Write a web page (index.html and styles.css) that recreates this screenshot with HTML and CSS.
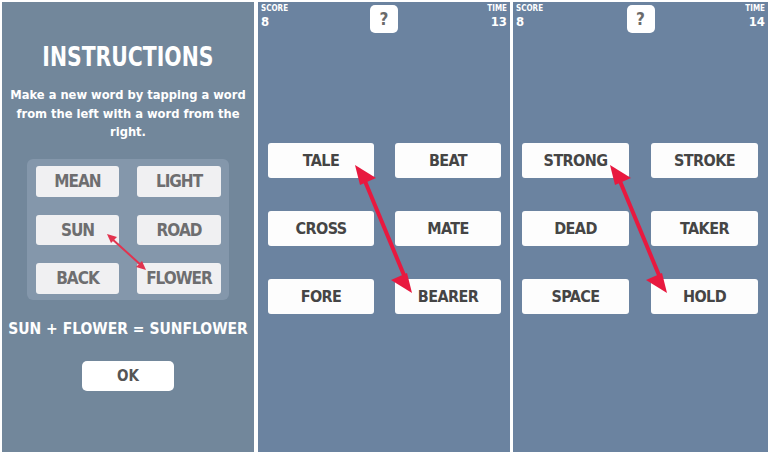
FILE: index.html
```html
<!DOCTYPE html>
<html>
<head>
<meta charset="utf-8">
<link rel="stylesheet" href="styles.css">
</head>
<body>
<div class="strip">
  <section class="panel intro">
    <h1 class="title">INSTRUCTIONS</h1>
    <p class="desc">Make a new word by tapping a word from the left with a word from the right.</p>
    <div class="demo">
      <div class="demo-grid">
        <div class="chip">MEAN</div>
        <div class="chip">LIGHT</div>
        <div class="chip">SUN</div>
        <div class="chip">ROAD</div>
        <div class="chip">BACK</div>
        <div class="chip">FLOWER</div>
      </div>
      <svg class="arrow" width="202" height="141" viewBox="0 0 202 141">
        <line x1="84" y1="79" x2="115" y2="107" stroke="#e2334f" stroke-width="2"/>
        <polygon points="80,75 90,78 84,84" fill="#e2334f"/>
        <polygon points="119,111 109,108 115,102" fill="#e2334f"/>
      </svg>
    </div>
    <p class="equation">SUN + FLOWER = SUNFLOWER</p>
    <div class="ok">OK</div>
  </section>

  <section class="panel game">
    <header class="hud">
      <div class="stat"><span class="label">SCORE</span><span class="value">8</span></div>
      <div class="help">?</div>
      <div class="stat right"><span class="label">TIME</span><span class="value">13</span></div>
    </header>
    <div class="board">
      <div class="word">TALE</div>
      <div class="word">BEAT</div>
      <div class="word">CROSS</div>
      <div class="word">MATE</div>
      <div class="word">FORE</div>
      <div class="word">BEARER</div>
    </div>
    <svg class="big-arrow" width="252" height="450" viewBox="0 0 252 450">
      <line x1="104" y1="172" x2="148" y2="278" stroke="#e8193f" stroke-width="4"/>
      <polygon points="97,163 118,176 102,183" fill="#e8193f"/>
      <polygon points="154,291 133,278 149,271" fill="#e8193f"/>
    </svg>
  </section>

  <section class="panel game wide">
    <header class="hud">
      <div class="stat"><span class="label">SCORE</span><span class="value">8</span></div>
      <div class="help">?</div>
      <div class="stat right"><span class="label">TIME</span><span class="value">14</span></div>
    </header>
    <div class="board">
      <div class="word">STRONG</div>
      <div class="word">STROKE</div>
      <div class="word">DEAD</div>
      <div class="word">TAKER</div>
      <div class="word">SPACE</div>
      <div class="word">HOLD</div>
    </div>
    <svg class="big-arrow" width="255" height="450" viewBox="0 0 255 450">
      <line x1="104" y1="172" x2="148" y2="278" stroke="#e8193f" stroke-width="4"/>
      <polygon points="97,163 118,176 102,183" fill="#e8193f"/>
      <polygon points="154,291 133,278 149,271" fill="#e8193f"/>
    </svg>
  </section>
</div>
</body>
</html>
```
FILE: styles.css
```css
html, body {
  margin: 0;
  padding: 0;
  background: #ffffff;
  width: 768px;
  height: 455px;
  overflow: hidden;
}

body {
  font-family: "DejaVu Sans Condensed", "DejaVu Sans", sans-serif;
  font-weight: bold;
}

.strip {
  display: flex;
  gap: 4px;
  padding: 2px 0 0 2px;
}

.panel {
  position: relative;
  width: 252px;
  height: 450px;
  box-sizing: border-box;
}

.intro {
  background: #72879b;
  display: flex;
  flex-direction: column;
  align-items: center;
  color: #ffffff;
}

.title {
  margin: 39px 0 0;
  font-size: 27px;
  line-height: 32px;
  font-weight: bold;
  white-space: nowrap;
  transform: scaleX(0.84);
}

.desc {
  margin: 13px 0 0;
  width: 246px;
  font-size: 12.8px;
  line-height: 18.5px;
  text-align: center;
}

.demo {
  position: relative;
  margin-top: 17px;
  width: 202px;
  height: 141px;
  box-sizing: border-box;
  background: #8497ab;
  border-radius: 6px;
  padding: 7px 8px 5px 9px;
}

.demo-grid {
  display: grid;
  grid-template-columns: 83px 84px;
  column-gap: 18px;
  grid-template-rows: 31px 30px 31px;
  row-gap: 18px;
}

.chip {
  background: #f0f0f2;
  border-radius: 3px;
  color: #6e6e70;
  font-size: 17px;
  letter-spacing: -1px;
  display: flex;
  align-items: center;
  justify-content: center;
}

.arrow {
  position: absolute;
  left: 0;
  top: 0;
}

.equation {
  margin: 19px 0 0;
  font-size: 15.5px;
  line-height: 20px;
  white-space: nowrap;
}

.ok {
  margin-top: 22px;
  width: 92px;
  height: 30px;
  background: #ffffff;
  border-radius: 5px;
  color: #555555;
  font-size: 15px;
  display: flex;
  align-items: center;
  justify-content: center;
}

.game {
  background: #6b83a0;
}

.game.wide {
  width: 255px;
  margin-left: -1px;
}

.hud {
  display: flex;
  justify-content: space-between;
  align-items: flex-start;
  padding: 2px 3px 0 3px;
  color: #ffffff;
}

.stat {
  display: flex;
  flex-direction: column;
  width: 40px;
}

.stat.right {
  align-items: flex-end;
}

.label {
  font-size: 8px;
  line-height: 10px;
}

.value {
  font-size: 13px;
  line-height: 15px;
}

.help {
  margin-top: 1px;
  width: 28px;
  height: 28px;
  background: #ffffff;
  border-radius: 5px;
  color: #6a6a6a;
  font-size: 17px;
  display: flex;
  align-items: center;
  justify-content: center;
}

.board {
  display: grid;
  grid-template-columns: 106px 106px;
  column-gap: 21px;
  grid-template-rows: repeat(3, 35px);
  row-gap: 33px;
  padding: 110px 0 0 10px;
}

.wide .board {
  grid-template-columns: 107px 107px;
  column-gap: 22px;
  padding-left: 9px;
}

.word {
  background: #fdfdfd;
  border-radius: 3px;
  color: #454545;
  font-size: 16px;
  letter-spacing: -0.6px;
  display: flex;
  align-items: center;
  justify-content: center;
}

.big-arrow {
  position: absolute;
  left: 0;
  top: 0;
}
```
